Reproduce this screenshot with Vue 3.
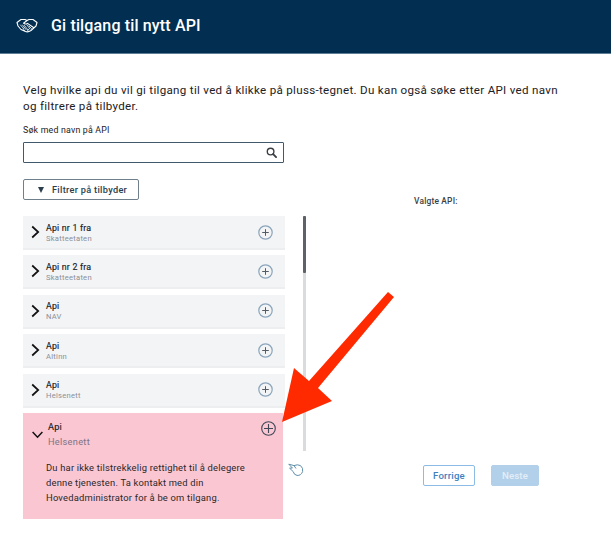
<script setup>
const apis = [
  { name: 'Api nr 1 fra', owner: 'Skatteetaten' },
  { name: 'Api nr 2 fra', owner: 'Skatteetaten' },
  { name: 'Api', owner: 'NAV' },
  { name: 'Api', owner: 'Altinn' },
  { name: 'Api', owner: 'Helsenett' },
]
</script>

<template>
  <div class="page">
    <header class="topbar">
      <svg class="hands" viewBox="0 0 22 15" fill="none" stroke="#fff" stroke-width="1.1" stroke-linejoin="round" stroke-linecap="round">
        <path d="M1 4.5 L5 1.5 H9 L11 2.5 L13 1.5 H17 L21 4.5 L20 8 L15 12.5 Q12 14.5 9.5 13.5 L5 11.5 L2 8 Z" />
        <path d="M11 2.5 L7.5 5.2 Q9 6.8 11.5 5.4 L17.5 9.5" />
        <path d="M4.5 7 L8 11 M6.5 7 L10 11.5 M8.5 7.5 L12 12 M11 7 L14 11 M13 8 L15.5 10.5 M7 11.5 L9 13 M13 11 L11 13.3" stroke-width="0.8" />
      </svg>
      <h1>Gi tilgang til nytt API</h1>
    </header>

    <main class="content">
      <p class="intro">Velg hvilke api du vil gi tilgang til ved å klikke på pluss-tegnet. Du kan også søke etter API ved navn og filtrere på tilbyder.</p>
      <label class="search-label" for="api-search">Søk med navn på API</label>
      <div class="search">
        <input id="api-search" type="text" />
        <svg viewBox="0 0 12 12" fill="none" stroke="#3b3f44" stroke-width="1.5" stroke-linecap="round">
          <circle cx="5" cy="5" r="3.6" />
          <path d="M7.8 7.8 L11 11" stroke-width="2" />
        </svg>
      </div>

      <div class="columns">
        <section class="left">
          <button class="filter" type="button"><span class="tri"></span>Filtrer på tilbyder</button>
          <div class="list-wrap">
            <ul class="list">
              <li v-for="(api, i) in apis" :key="i" class="row">
                <svg class="chev" viewBox="0 0 9 14" fill="none" stroke="#111" stroke-width="1.7">
                  <path d="M1.2 1.5 L7.2 7 L1.2 12.5" />
                </svg>
                <div class="names">
                  <div class="name">{{ api.name }}</div>
                  <div class="owner">{{ api.owner }}</div>
                </div>
                <svg class="plus" viewBox="0 0 15 15" fill="none">
                  <circle cx="7.5" cy="7.5" r="6.7" stroke="#8aa4ba" stroke-width="1.2" />
                  <path d="M7.5 4.2 V10.8 M4.2 7.5 H10.8" stroke="#555b62" stroke-width="1" />
                </svg>
              </li>
              <li class="row-open">
                <div class="open-head">
                  <svg class="chev-down" viewBox="0 0 14 9" fill="none" stroke="#111" stroke-width="1.7">
                    <path d="M1.5 1.2 L7 7 L12.5 1.2" />
                  </svg>
                  <div class="names">
                    <div class="name">Api</div>
                    <div class="owner-open">Helsenett</div>
                  </div>
                  <svg class="plus-open" viewBox="0 0 15 15" fill="none" stroke="#3f4756" stroke-width="1.1">
                    <circle cx="7.5" cy="7.5" r="6.8" />
                    <path d="M7.5 3 V12 M3 7.5 H12" />
                  </svg>
                </div>
                <p class="msg">Du har ikke tilstrekkelig rettighet til å delegere denne tjenesten. Ta kontakt med din Hovedadministrator for å be om tilgang.</p>
              </li>
            </ul>
            <div class="track"><div class="thumb"></div></div>
          </div>
        </section>

        <section class="right">
          <div class="selected">Valgte API:</div>
          <div class="actions">
            <button class="btn prev" type="button">Forrige</button>
            <button class="btn next" type="button">Neste</button>
          </div>
        </section>
      </div>
    </main>

    <svg class="cursor" viewBox="0 0 16 14" fill="none" stroke="#5f8fa8" stroke-width="1" stroke-linejoin="round">
      <path d="M0.8 1.2 L6 2.6 Q9.5 1 12.5 2.6 Q15.5 5 14.6 8.6 Q13 12.8 9 12.4 Q6 12 5.2 8.6 L1.6 5.2 L4.4 5 Z" />
      <path d="M6 2.6 L8 5.5" />
    </svg>
    <svg class="arrow" viewBox="0 0 611 558">
      <polygon points="388,292 394,297 318,388 332,401 282,422 294,368 309,381" fill="#ff2a00" />
    </svg>
  </div>
</template>

<style>
html, body { margin: 0; background: #fff; }
</style>

<style scoped>
.page {
  position: relative;
  width: 611px;
  height: 558px;
  overflow: hidden;
  background: #fff;
  color: #1c2024;
  font-family: "Roboto", "Liberation Sans", sans-serif;
}
.topbar {
  height: 54px;
  background: #022f51;
  border-bottom: 1px solid #5d7d96;
  display: flex;
  align-items: center;
  padding-left: 16px;
  padding-bottom: 2px;
  box-sizing: border-box;
}
.hands { width: 22px; height: 15px; margin-right: 13px; }
.topbar h1 {
  margin: 0;
  font-size: 16px;
  font-weight: 500;
  color: #fff;
  letter-spacing: 0.15px;
}
.content { padding: 28px 0 0 23px; }
.intro {
  margin: 0;
  width: 545px;
  font-size: 11.6px;
  line-height: 16px;
  letter-spacing: 0.3px;
}
.search-label {
  display: block;
  margin-top: 11px;
  font-size: 8.8px;
  line-height: 11px;
  letter-spacing: 0.2px;
}
.search {
  position: relative;
  width: 261px;
  height: 21px;
  margin-top: 6px;
}
.search input {
  width: 100%;
  height: 100%;
  box-sizing: border-box;
  margin: 0;
  padding: 0;
  border: 1px solid #42586b;
  border-radius: 1px;
  background: #fff;
  outline: none;
}
.search svg {
  position: absolute;
  right: 7px;
  top: 5px;
  width: 11px;
  height: 11px;
}
.columns { display: flex; margin-top: 16px; }
.left { width: 283px; flex: none; }
.filter {
  display: flex;
  align-items: center;
  width: 116px;
  height: 21px;
  padding: 0 0 0 14px;
  box-sizing: border-box;
  border: 1px solid #6f7f8c;
  border-radius: 2px;
  background: #fff;
  color: #2c3e4e;
  font: 500 9.2px "Roboto", sans-serif;
  letter-spacing: 0.3px;
}
.tri {
  width: 0;
  height: 0;
  margin-right: 8px;
  border-left: 3.5px solid transparent;
  border-right: 3.5px solid transparent;
  border-top: 6px solid #2c3e4e;
}
.list-wrap { display: flex; margin-top: 16px; height: 304px; }
.list {
  list-style: none;
  margin: 0;
  padding: 0;
  width: 262px;
  flex: none;
}
.row {
  height: 34px;
  margin-bottom: 5.4px;
  box-sizing: border-box;
  background: #f3f4f6;
  border-bottom: 2px solid #eceeef;
  display: flex;
  align-items: center;
  padding: 0 12px 0 8px;
}
.chev { width: 9px; height: 14px; margin-right: 6px; flex: none; }
.names { flex: 1; min-width: 0; padding-top: 1px; }
.name { font-size: 8.8px; line-height: 11px; font-weight: 400; color: #1c2024; letter-spacing: 0.2px; margin-top: 1px; -webkit-text-stroke: 0.15px #1c2024; }
.owner { font-size: 7.6px; line-height: 10px; color: #8b9097; letter-spacing: 0.25px; }
.plus { width: 15px; height: 15px; flex: none; }
.row-open {
  width: 260px;
  height: 106px;
  margin-top: 0.5px;
  box-sizing: border-box;
  background: #f9c6d2;
  padding: 7px 7px 0 8px;
}
.open-head { display: flex; align-items: flex-start; }
.chev-down { width: 13px; height: 8px; margin: 11px 4px 0 0; flex: none; }
.open-head .names { padding-top: 0; }
.open-head .name { font-size: 9.2px; line-height: 12px; margin-top: 1px; }
.owner-open { font-size: 9.2px; line-height: 12px; margin-top: 3px; color: #7f7385; letter-spacing: 0.3px; }
.plus-open { width: 15px; height: 15px; flex: none; margin-top: 1px; }
.msg {
  margin: 12px 0 0 15px;
  width: 212px;
  font-size: 9.4px;
  line-height: 15.2px;
  letter-spacing: 0.2px;
  color: #2b2628;
}
.track {
  width: 3px;
  height: 235px;
  margin-left: 18px;
  background: #d9dbdd;
  flex: none;
}
.thumb { height: 57px; background: #5c6268; border-radius: 1px; }
.right { padding: 17px 0 0 108px; flex: none; width: 240px; box-sizing: border-box; }
.selected { font-size: 8.4px; line-height: 11px; font-weight: 500; color: #3a3f44; letter-spacing: 0.2px; white-space: nowrap; }
.actions { display: flex; gap: 16px; margin-top: 258px; margin-left: 9px; }
.btn {
  height: 21px;
  flex: none;
  box-sizing: border-box;
  border-radius: 2px;
  padding: 0;
  font: 500 9.6px "Roboto", sans-serif;
  letter-spacing: 0.2px;
}
.prev { width: 52px; background: #fff; border: 1.5px solid #8cbbe6; color: #3d80bf; }
.next { width: 48px; background: #b3d0ea; border: 1px solid #b3d0ea; color: #e3eef7; }
.cursor { position: absolute; left: 288px; top: 463px; width: 16px; height: 14px; }
.arrow { position: absolute; left: 0; top: 0; width: 611px; height: 558px; pointer-events: none; }
</style>
